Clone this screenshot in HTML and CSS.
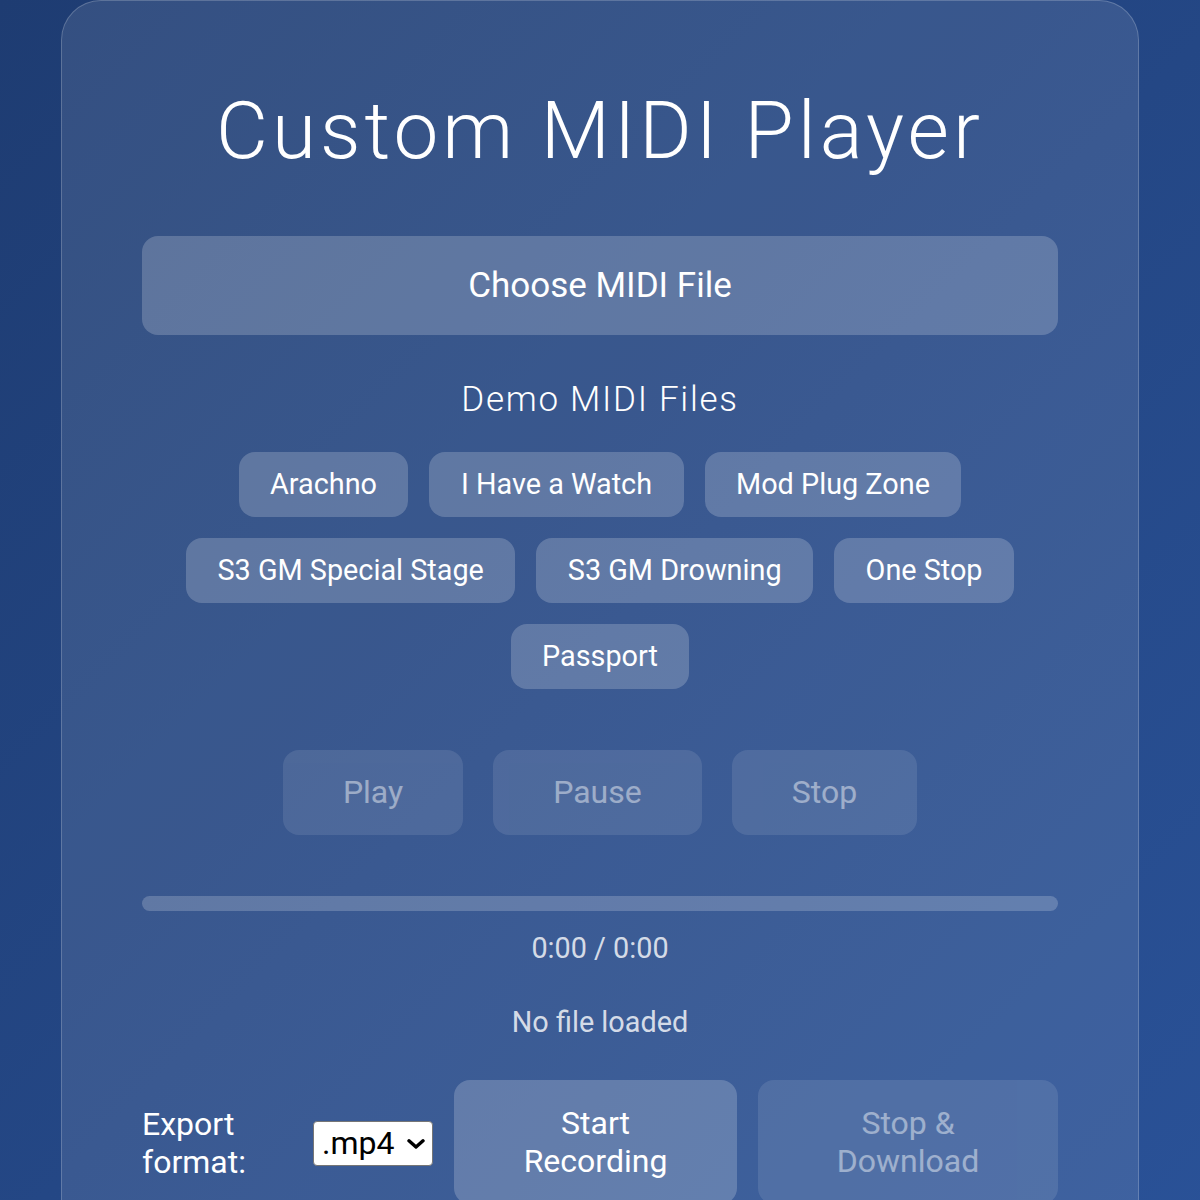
FILE: index.html
```html
<!DOCTYPE html>
<html lang="en">
<head>
<meta charset="utf-8">
<title>Custom MIDI Player</title>
<link rel="stylesheet" href="styles.css">
</head>
<body>
<main class="card">
  <h1 class="title">Custom MIDI Player</h1>
  <button class="btn btn-file">Choose MIDI File</button>
  <h2 class="subtitle">Demo MIDI Files</h2>
  <div class="demo-list">
    <button class="btn btn-demo">Arachno</button>
    <button class="btn btn-demo">I Have a Watch</button>
    <button class="btn btn-demo">Mod Plug Zone</button>
    <button class="btn btn-demo">S3 GM Special Stage</button>
    <button class="btn btn-demo">S3 GM Drowning</button>
    <button class="btn btn-demo">One Stop</button>
    <button class="btn btn-demo">Passport</button>
  </div>
  <div class="controls">
    <button class="btn btn-big" disabled>Play</button>
    <button class="btn btn-big" disabled>Pause</button>
    <button class="btn btn-big" disabled>Stop</button>
  </div>
  <div class="progress"><div class="progress-fill"></div></div>
  <div class="time">0:00 / 0:00</div>
  <div class="status">No file loaded</div>
  <div class="export-row">
    <label class="export-label" for="fmt">Export format:</label>
    <div class="select-wrap">
      <select class="export-select" id="fmt">
        <option>.mp4</option>
        <option>.webm</option>
      </select>
      <svg class="select-arrow" width="18" height="10" viewBox="0 0 18 10" aria-hidden="true">
        <path d="M2 1.8 L9 8 L16 1.8" fill="none" stroke="#000" stroke-width="3.4" stroke-linecap="round" stroke-linejoin="round"/>
      </svg>
    </div>
    <button class="btn btn-big btn-rec btn-start">Start Recording</button>
    <button class="btn btn-big btn-rec btn-dl" disabled>Stop &amp; Download</button>
  </div>
</main>
</body>
</html>
```

FILE: styles.css
```css
* {
  box-sizing: border-box;
}

html, body {
  margin: 0;
  padding: 0;
}

body {
  min-height: 1200px;
  background: linear-gradient(135deg, #1e3c72 0%, #2a5298 100%);
  font-family: Roboto, "Liberation Sans", sans-serif;
  color: #ffffff;
  overflow: hidden;
}

.card {
  width: 1078px;
  margin: 0 auto;
  padding: 83px 80px 80px;
  background: rgba(255, 255, 255, 0.1);
  border: 1px solid rgba(255, 255, 255, 0.2);
  border-radius: 40px;
  display: flex;
  flex-direction: column;
  align-items: stretch;
}

.title {
  margin: 0 0 58px;
  font-size: 80px;
  font-weight: 300;
  line-height: 94px;
  letter-spacing: 4px;
  text-align: center;
}

.btn {
  font-family: inherit;
  color: #ffffff;
  background: rgba(255, 255, 255, 0.2);
  border: none;
  border-radius: 16px;
  cursor: pointer;
}

.btn:disabled {
  opacity: 0.5;
  cursor: default;
}

.btn-file {
  height: 99px;
  font-size: 35px;
  line-height: 40px;
  padding: 0 20px;
}

.subtitle {
  margin: 46px 0 33px;
  font-size: 35px;
  font-weight: 300;
  line-height: 38px;
  letter-spacing: 1.7px;
  text-align: center;
}

.demo-list {
  display: flex;
  flex-wrap: wrap;
  justify-content: center;
  gap: 21px;
}

.btn-demo {
  font-size: 28.8px;
  line-height: 33px;
  padding: 16px 31.5px;
}

.controls {
  display: flex;
  justify-content: center;
  gap: 30px;
  margin-top: 61px;
}

.btn-big {
  font-size: 32px;
  line-height: 37px;
  padding: 24px 60px;
}

.progress {
  margin-top: 61px;
  height: 15px;
  border-radius: 8px;
  background: rgba(255, 255, 255, 0.2);
  overflow: hidden;
}

.progress-fill {
  width: 0;
  height: 100%;
}

.time,
.status {
  font-size: 28.8px;
  line-height: 33px;
  text-align: center;
  color: rgba(255, 255, 255, 0.8);
}

.time {
  margin-top: 21px;
}

.status {
  margin-top: 41px;
}

.export-row {
  margin-top: 41px;
  display: flex;
  align-items: center;
  gap: 21px;
}

.export-label {
  flex: 0 0 150px;
  font-size: 32px;
  line-height: 38px;
  padding-top: 2px;
}

.select-wrap {
  position: relative;
  flex: 0 0 120px;
  height: 45px;
  margin-top: 2px;
}

.export-select {
  appearance: none;
  -webkit-appearance: none;
  width: 100%;
  height: 100%;
  margin: 0;
  padding: 0 30px 0 8px;
  font-family: inherit;
  font-size: 32px;
  line-height: 40px;
  color: #000000;
  background: #ffffff;
  border: 1px solid #767676;
  border-radius: 4px;
}

.select-arrow {
  position: absolute;
  right: 8px;
  top: 18px;
  pointer-events: none;
}

.btn-rec {
  text-align: center;
  line-height: 38px;
}

.btn-start {
  flex: 0 0 283px;
}

.btn-dl {
  flex: 1 1 auto;
}
```
